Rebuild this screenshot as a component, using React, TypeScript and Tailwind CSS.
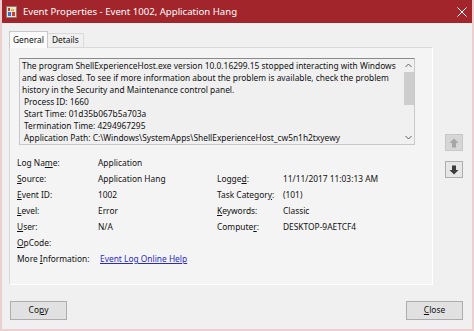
import React from "react";

const U = ({ children }: { children: React.ReactNode }) => <span className="underline">{children}</span>;

function ArrowBtn({ dir, disabled }: { dir: "up" | "down"; disabled?: boolean }) {
  const color = disabled ? "#a6a6a6" : "#3c3c3c";
  return (
    <div
      className={
        "w-[18px] h-[17px] flex items-center justify-center border " +
        (disabled ? "bg-[#d6d6d6] border-[#c8c8c8]" : "bg-[#e6e6e6] border-[#adadad]")
      }
    >
      <svg width="10" height="10" viewBox="0 0 10 10">
        {dir === "up" ? (
          <path d="M5 0.5 L9.5 5 L7 5 L7 9.5 L3 9.5 L3 5 L0.5 5 Z" fill={color} />
        ) : (
          <path d="M5 9.5 L9.5 5 L7 5 L7 0.5 L3 0.5 L3 5 L0.5 5 Z" fill={color} />
        )}
      </svg>
    </div>
  );
}

export default function App() {
  const font = { fontFamily: '"Segoe UI", "Noto Sans", "Open Sans", sans-serif' };
  return (
    <div
      className="w-[474px] h-[331px] bg-[#f0f0f0] flex flex-col border-x-2 border-b-2 border-[#eccfd0] text-[8.4px] text-[#111111] overflow-hidden"
      style={font}
    >
      {/* Title bar */}
      <div className="h-[23px] bg-[#a2252b] flex items-center pl-[4px] pr-[7px] text-white -mx-[2px]">
        <svg width="11" height="12" viewBox="0 0 11 12" className="ml-[2px] mr-[6px]">
          <rect x="0.5" y="0.5" width="10" height="11" fill="#e8e4dc" stroke="#8a7f70" strokeWidth="1" />
          <rect x="2" y="2" width="2" height="3" fill="#d23b2a" />
          <rect x="5" y="3" width="3" height="2" fill="#f0b429" />
          <rect x="2" y="6" width="3" height="4" fill="#3b6fd6" />
          <rect x="6" y="6" width="3" height="4" fill="#d23b2a" />
        </svg>
        <span className="text-[9.6px] leading-none">Event Properties - Event 1002, Application Hang</span>
        <div className="flex-1" />
        <svg width="10" height="10" viewBox="0 0 10 10">
          <path d="M0.5 0.5 L9.5 9.5 M9.5 0.5 L0.5 9.5" stroke="white" strokeWidth="1" />
        </svg>
      </div>

      {/* Body */}
      <div className="flex-1 flex flex-col pl-[7px] pr-[9px]">
        <div className="flex pt-[8px]">
          <div className="w-[424px] flex flex-col">
            {/* Tabs */}
            <div className="flex items-end h-[16px]">
              <div className="h-[17px] px-[3px] bg-[#fbfbfb] border border-b-0 border-[#c9c9c9] flex items-center relative z-10 -mb-[1px]">
                General
              </div>
              <div className="h-[14px] px-[4px] border border-l-0 border-b-0 border-[#dadada] flex items-center bg-[#f0f0f0]">
                Details
              </div>
            </div>
            {/* Panel */}
            <div className="h-[238px] bg-[#f4f4f4] border border-[#d9d9d9] border-b-white border-r-white flex flex-col px-[9px] pt-[10px]">
              {/* Text box */}
              <div className="w-[396px] h-[87px] border border-[#c8c8c8] border-t-[#8a8a8a] flex bg-[#f0f0f0] overflow-hidden">
                <div className="flex-1 pl-[2px] pt-[1px] leading-[12px] overflow-hidden whitespace-nowrap">
                  <div>The program ShellExperienceHost.exe version 10.0.16299.15 stopped interacting with Windows</div>
                  <div>and was closed. To see if more information about the problem is available, check the problem</div>
                  <div>history in the Security and Maintenance control panel.</div>
                  <div className="pl-[2px]">Process ID: 1660</div>
                  <div className="pl-[2px]">Start Time: 01d35b067b5a703a</div>
                  <div className="pl-[2px]">Termination Time: 4294967295</div>
                  <div className="pl-[2px]">Application Path: C:\Windows\SystemApps\ShellExperienceHost_cw5n1h2txyewy</div>
                </div>
                <div className="w-[11px] flex flex-col items-center bg-[#f0f0f0]">
                  <div className="h-[13px] flex items-center justify-center">
                    <svg width="7" height="5" viewBox="0 0 7 5">
                      <path d="M0.5 4 L3.5 1 L6.5 4" stroke="#606060" fill="none" strokeWidth="1" />
                    </svg>
                  </div>
                  <div className="w-[10px] h-[33px] bg-[#cdcdcd]" />
                  <div className="flex-1" />
                  <div className="h-[13px] flex items-center justify-center">
                    <svg width="7" height="5" viewBox="0 0 7 5">
                      <path d="M0.5 1 L3.5 4 L6.5 1" stroke="#606060" fill="none" strokeWidth="1" />
                    </svg>
                  </div>
                </div>
              </div>

              {/* Fields */}
              <div className="grid grid-cols-[81px_119px_66px_1fr] leading-[16px] mt-[10px] -ml-[2px]">
                <div>Log Na<U>m</U>e:</div>
                <div>Application</div>
                <div></div>
                <div></div>

                <div><U>S</U>ource:</div>
                <div>Application Hang</div>
                <div>Logge<U>d</U>:</div>
                <div>11/11/2017 11:03:13 AM</div>

                <div><U>E</U>vent ID:</div>
                <div>1002</div>
                <div>Task Categor<U>y</U>:</div>
                <div>(101)</div>

                <div><U>L</U>evel:</div>
                <div>Error</div>
                <div><U>K</U>eywords:</div>
                <div>Classic</div>

                <div><U>U</U>ser:</div>
                <div>N/A</div>
                <div>Compute<U>r</U>:</div>
                <div>DESKTOP-9AETCF4</div>

                <div><U>O</U>pCode:</div>
                <div></div>
                <div></div>
                <div></div>

                <div>More <U>I</U>nformation:</div>
                <div className="col-span-3 pl-[2px]">
                  <span className="text-[#2b2bc4] underline">Event Log Online Help</span>
                </div>
              </div>
            </div>
          </div>
          {/* Right arrows */}
          <div className="flex-1 flex flex-col items-end pt-[103px] gap-[10px]">
            <ArrowBtn dir="up" disabled />
            <ArrowBtn dir="down" />
          </div>
        </div>

        {/* Buttons */}
        <div className="flex justify-between mt-[16px] pl-[1px]">
          <div className="w-[57px] h-[19px] bg-[#e1e1e1] border border-[#adadad] flex items-center justify-center">
            Co<U>p</U>y
          </div>
          <div className="w-[57px] h-[19px] bg-[#e1e1e1] border border-[#adadad] flex items-center justify-center">
            <U>C</U>lose
          </div>
        </div>
      </div>
    </div>
  );
}
